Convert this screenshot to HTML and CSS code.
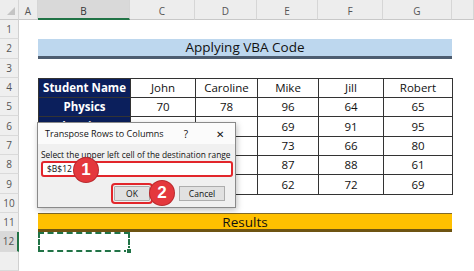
FILE: index.html
```html
<!DOCTYPE html>
<html lang="en">
<head>
    <meta charset="UTF-8">
    <title>Applying VBA Code</title>
    <link rel="stylesheet" href="styles.css">
</head>
<body>
    <div class="sheet">
        <!-- column headers -->
        <div class="col-hd corner"><span class="corner-tri"></span></div>
        <div class="col-hd">A</div>
        <div class="col-hd is-sel">B</div>
        <div class="col-hd">C</div>
        <div class="col-hd">D</div>
        <div class="col-hd">E</div>
        <div class="col-hd">F</div>
        <div class="col-hd">G</div>
        <div class="col-hd"></div>

        <!-- row headers -->
        <div class="row-hd">1</div>
        <div class="row-hd">2</div>
        <div class="row-hd">3</div>
        <div class="row-hd">4</div>
        <div class="row-hd">5</div>
        <div class="row-hd">6</div>
        <div class="row-hd">7</div>
        <div class="row-hd">8</div>
        <div class="row-hd">9</div>
        <div class="row-hd">10</div>
        <div class="row-hd">11</div>
        <div class="row-hd is-sel">12</div>
        <div class="row-hd"></div>

        <div class="banner banner-blue">Applying VBA Code</div>

        <table class="scores">
            <colgroup>
                <col class="c-b"><col class="c-c"><col class="c-d"><col class="c-e"><col class="c-f"><col class="c-g">
            </colgroup>
            <tr><td class="subj">Student Name</td><td>John</td><td>Caroline</td><td>Mike</td><td>Jill</td><td>Robert</td></tr>
            <tr><td class="subj">Physics</td><td>70</td><td>78</td><td>96</td><td>64</td><td>65</td></tr>
            <tr><td class="subj">Chemistry</td><td>82</td><td>74</td><td>69</td><td>91</td><td>95</td></tr>
            <tr><td class="subj">Biology</td><td>77</td><td>85</td><td>73</td><td>66</td><td>80</td></tr>
            <tr><td class="subj">Math</td><td>90</td><td>68</td><td>87</td><td>88</td><td>61</td></tr>
            <tr><td class="subj">English</td><td>75</td><td>93</td><td>62</td><td>72</td><td>69</td></tr>
        </table>

        <div class="banner banner-gold">Results</div>

        <div class="marquee"></div>

        <!-- input box over the sheet -->
        <div class="dialog">
            <div class="dlg-title">
                <span class="dlg-caption">Transpose Rows to Columns</span>
                <span class="dlg-help">?</span>
                <span class="dlg-close">✕</span>
            </div>
            <div class="dlg-body">
                <div class="dlg-label">Select the upper left cell of the destination range</div>
                <div class="dlg-input">$B$12</div>
                <div class="dlg-buttons">
                    <button class="btn btn-ok">OK</button>
                    <button class="btn">Cancel</button>
                </div>
            </div>
        </div>

        <span class="badge badge-1">1</span>
        <span class="badge badge-2">2</span>
    </div>
</body>
</html>
```

FILE: styles.css
```css
body {
    margin: 0;
    background: #fff;
    font-family: "Open Sans", "Noto Sans", sans-serif;
}
.sheet {
    position: relative;
    display: grid;
    grid-template-columns: 19px 19px 92px 65px 62px 61px 65px 69px 1fr;
    grid-template-rows: 20px repeat(12, 19.3px) 1fr;
    width: 474px;
    height: 271px;
    overflow: hidden;
}
.col-hd {
    background: #ededed;
    border-right: 1px solid #d6d6d6;
    border-bottom: 1px solid #c8c8c8;
    color: #555;
    font-size: 10px;
    display: flex;
    align-items: center;
    justify-content: center;
    padding-top: 3px;
}
.col-hd.is-sel {
    background: #d9d9d9;
    border-bottom: 2px solid #217346;
    color: #333;
}
.corner {
    position: relative;
}
.corner-tri {
    position: absolute;
    right: 3px;
    bottom: 4px;
    width: 8px;
    height: 8px;
    background: #c4c4c4;
    clip-path: polygon(100% 0, 100% 100%, 0 100%);
}
.row-hd {
    grid-column: 1;
    background: #efefef;
    border-right: 1px solid #d0d0d0;
    border-bottom: 1px solid #dadada;
    color: #555;
    font-size: 10px;
    display: flex;
    align-items: center;
    justify-content: center;
}
.row-hd.is-sel {
    background: #d9d9d9;
    border-right: 2px solid #217346;
}
.banner {
    grid-column: 3 / 9;
    display: flex;
    align-items: center;
    justify-content: center;
    font-family: "Open Sans", "Noto Sans", sans-serif;
    font-size: 13.5px;
    color: #111;
}
.banner-blue {
    grid-row: 3;
    background: #bdd7ee;
    border-bottom: 3px solid #4d5d70;
}
.banner-gold {
    grid-row: 12;
    background: #ffc000;
    border-top: 1px solid #806a2a;
    border-bottom: 3px solid #6e5412;
}
.scores {
    grid-column: 3 / 9;
    grid-row: 5 / 11;
    border-collapse: collapse;
    table-layout: fixed;
    width: 414px;
    height: 115.8px;
    font-family: "Open Sans", "Noto Sans", sans-serif;
    font-size: 11.5px;
    color: #111;
}
.c-b { width: 92px; }
.c-c { width: 65px; }
.c-d { width: 62px; }
.c-e { width: 61px; }
.c-f { width: 65px; }
.c-g { width: 69px; }
.scores td {
    border: 1px solid #333;
    text-align: center;
    padding: 0;
    height: 18.3px;
    line-height: 16px;
    white-space: nowrap;
    overflow: hidden;
}
.scores td.subj {
    background: #0b1f5c;
    color: #fff;
    font-weight: bold;
}
.marquee {
    grid-column: 3;
    grid-row: 13;
    border: 2px dashed #217346;
    position: relative;
}
.marquee::after {
    content: "";
    position: absolute;
    right: -4px;
    bottom: -4px;
    width: 4px;
    height: 4px;
    background: #217346;
    border: 1px solid #fff;
}
.dialog {
    position: absolute;
    left: 37px;
    top: 122px;
    width: 197px;
    height: 84px;
    background: #f0f0f0;
    border: 1px solid #8a8a8a;
    box-shadow: 1px 2px 6px rgba(0, 0, 0, 0.25);
    display: flex;
    flex-direction: column;
    font-family: "Open Sans", "Noto Sans", sans-serif;
    color: #111;
}
.dlg-title {
    height: 21px;
    background: #fbfbfb;
    display: flex;
    align-items: center;
    padding-left: 7px;
    font-size: 9px;
}
.dlg-caption {
    flex: 1;
}
.dlg-help {
    width: 14px;
    text-align: center;
    font-size: 10px;
    margin-right: 20px;
}
.dlg-close {
    width: 14px;
    text-align: center;
    font-size: 10px;
    margin-right: 8px;
}
.dlg-body {
    flex: 1;
    padding: 5px 2px 0 3px;
}
.dlg-label {
    font-size: 8.4px;
    line-height: 11px;
}
.dlg-input {
    margin-top: 1px;
    height: 12px;
    line-height: 12px;
    border: 2px solid #e2262b;
    border-radius: 3px;
    background: #fff;
    padding-left: 4px;
    font-size: 8.5px;
}
.dlg-buttons {
    display: flex;
    justify-content: flex-end;
    gap: 29px;
    padding: 9px 8px 0 0;
}
.btn {
    width: 46px;
    height: 15px;
    padding: 0;
    background: #e1e1e1;
    border: 1px solid #adadad;
    font-family: "Open Sans", "Noto Sans", sans-serif;
    font-size: 8.5px;
    color: #111;
}
.btn-ok {
    width: 36px;
    outline: 2px solid #e2262b;
    outline-offset: 1px;
    border-radius: 1px;
}
.badge {
    position: absolute;
    width: 24px;
    height: 24px;
    border-radius: 50%;
    background: #e4383d;
    box-shadow: 0 0 0 1px #b82a2e;
    color: #fff;
    font-family: "Liberation Sans", Arial, sans-serif;
    font-weight: bold;
    font-size: 17px;
    display: flex;
    align-items: center;
    justify-content: center;
}
.badge-1 {
    left: 74px;
    top: 158px;
}
.badge-2 {
    left: 150px;
    top: 181px;
}
```
